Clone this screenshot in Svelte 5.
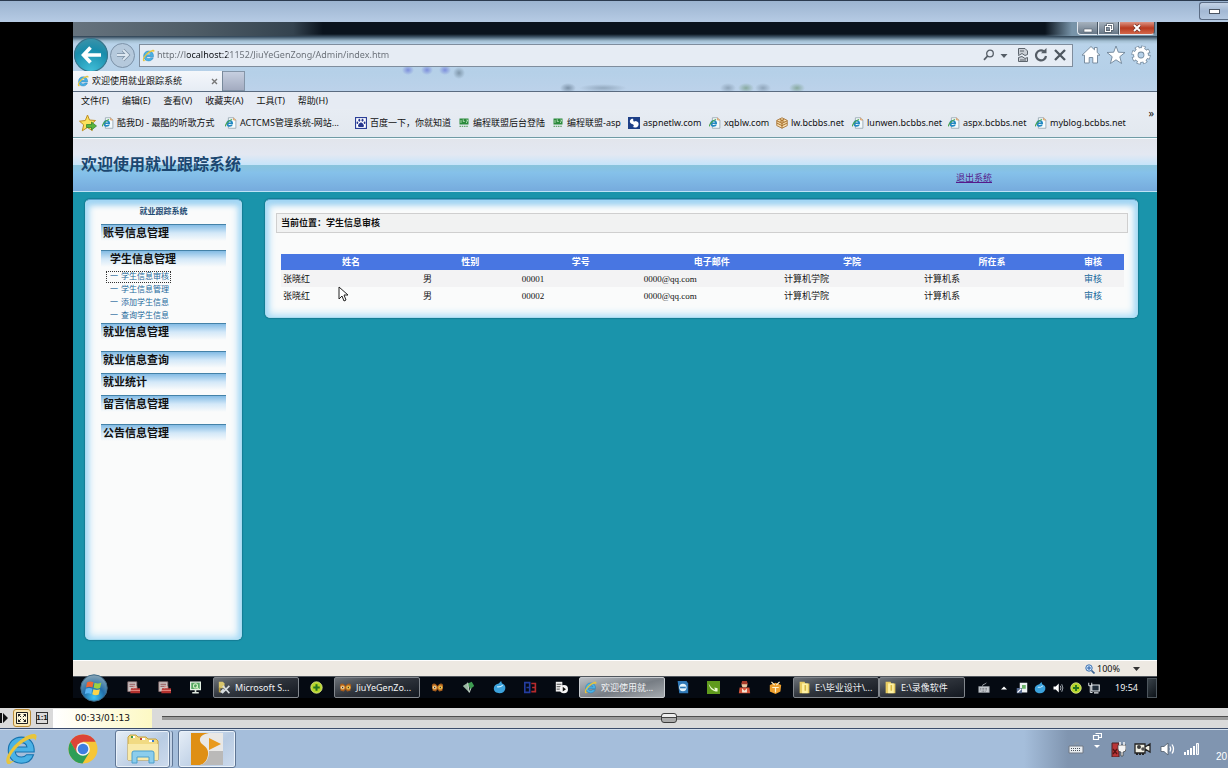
<script>
  const menus = ["文件(F)", "编辑(E)", "查看(V)", "收藏夹(A)", "工具(T)", "帮助(H)"]

  const favorites = [
    { icon: "page", label: "酷我DJ - 最酷的听歌方式" },
    { icon: "page", label: "ACTCMS管理系统-网站..." },
    { icon: "paw", label: "百度一下，你就知道" },
    { icon: "green", label: "编程联盟后台登陆" },
    { icon: "green", label: "编程联盟-asp" },
    { icon: "swirl", label: "aspnetlw.com" },
    { icon: "page", label: "xqblw.com" },
    { icon: "hex", label: "lw.bcbbs.net" },
    { icon: "page", label: "lunwen.bcbbs.net" },
    { icon: "page", label: "aspx.bcbbs.net" },
    { icon: "page", label: "myblog.bcbbs.net" }
  ]

  const groups = [
    { title: "账号信息管理" },
    {
      title: "学生信息管理",
      items: ["学生信息审核", "学生信息管理", "添加学生信息", "查询学生信息"]
    },
    { title: "就业信息管理" },
    { title: "就业信息查询" },
    { title: "就业统计" },
    { title: "留言信息管理" },
    { title: "公告信息管理" }
  ]

  const columns = ["姓名", "性别", "学号", "电子邮件", "学院", "所在系", "审核"]

  const students = [
    ["张晓红", "男", "00001", "0000@qq.com", "计算机学院", "计算机系"],
    ["张晓红", "男", "00002", "0000@qq.com", "计算机学院", "计算机系"]
  ]

  const tasks = [
    { icon: "toolbox" },
    { icon: "toolbox" },
    { icon: "monitor" },
    { icon: "tools", label: "Microsoft S..." },
    { icon: "plus" },
    { icon: "owl", label: "JiuYeGenZo..." },
    { icon: "owl" },
    { icon: "diamond" },
    { icon: "drop" },
    { icon: "books" },
    { icon: "docplay" },
    { icon: "ie", label: "欢迎使用就...", active: true },
    { icon: "bluepage" },
    { icon: "leaf" },
    { icon: "person" },
    { icon: "box" },
    { icon: "folder", label: "E:\\毕业设计\\...", joined: true },
    { icon: "folder", label: "E:\\录像软件", joined: true }
  ]

  const tray = ["keyboard", "up", "pages", "drop", "sound", "plus", "network"]

  let url = $state("http://localhost:21152/JiuYeGenZong/Admin/index.htm")
  let position = $state(47.5)
  let current = $state("学生信息审核")
</script>

{#snippet icon(name, size = 12)}
  <svg class="icon" width={size} height={size} viewBox="0 0 16 16" aria-hidden="true">
    {#if name === "ie"}
      <path d="M14.200 9.400H5.300c.2 1.500 1.300 2.400 2.900 2.400 1 0 1.900-.4 2.400-1.100h3.300c-.8 2.400-2.900 4-5.700 4-3.700 0-6.200-2.500-6.200-6.100C2 4.900 4.600 2.400 8.200 2.400c3.800 0 6.200 2.700 6 7zM10.800 7.100C10.600 5.700 9.600 5 8.100 5S5.700 5.800 5.300 7.100z" fill="#4ab2e6" stroke="#1672ad" stroke-width=".5" />
      <path d="M1.500 14.800C-.4 12.500 4 6 9 2.900c3.200-2 6-2.600 6.300-1.100.1.700-.2 1.500-.6 2.300.1-1.500-1.700-1.400-4.400 0C5.700 6.600 1.800 12 2.700 13.500c.4.600 1.400.3 2.500-.3-1.600 1.500-3 2.400-3.700 1.600z" fill="#e8c53c" />
    {:else if name === "page"}
      <path d="M4.500 1h7l3 3v11h-10z" fill="#f4fafc" stroke="#8b9da8" />
      <path d="M11.500 1v3h3" fill="#f6d9a0" stroke="#d08a5a" />
      <path d="M10.800 9.200H4.300c.1 1.100.8 1.600 1.900 1.600.7 0 1.300-.3 1.700-.8h2.600c-.7 2-2.200 3-4.200 3C3.600 13 1.800 11.300 1.800 8.500s1.800-4.600 4.500-4.600c2.900 0 4.600 2 4.500 5.300zM8 7.300c-.2-.9-.8-1.300-1.700-1.300s-1.500.4-1.800 1.300z" fill="#2389c2" />
      <path d="M.7 12.500C0 10 5 4 9.500 3.400" fill="none" stroke="#4aa54c" stroke-width="1.400" />
    {:else if name === "paw"}
      <path d="M0 0h16v16H0z" fill="#2b3f98" />
      <path d="M1.500 1.500h13v13h-13z" fill="#fff" />
      <ellipse cx="5.800" cy="4.300" rx="1.300" ry="1.900" fill="#26378f" />
      <ellipse cx="10" cy="4.300" rx="1.300" ry="1.900" fill="#26378f" />
      <ellipse cx="3.200" cy="7.600" rx="1.200" ry="1.600" fill="#26378f" />
      <ellipse cx="12.800" cy="7.600" rx="1.200" ry="1.600" fill="#26378f" />
      <path d="M8 7.200c1.800 0 4.400 3.200 3.900 5.200-.4 1.500-2.400.8-3.900.8s-3.500.7-3.900-.8C3.600 10.400 6.200 7.200 8 7.200z" fill="#26378f" />
    {:else if name === "green"}
      <path d="M2 2h12v8H2z" fill="#2b8a3c" />
      <path d="M4 4v4M7 3v3h2M11 4h2l-2 4" fill="none" stroke="#cfeccb" />
      <path d="M2 12.500h12" stroke="#69a56f" stroke-dasharray="2 1" stroke-width="1.500" />
    {:else if name === "swirl"}
      <path d="M0 0h16v16H0z" fill="#1d3f87" />
      <path d="M7 2.500C4 2 1.500 4.500 3 7.500c1 2 3.500 1 4.500 3 .7 1.500-.3 2.500-1.500 2.500 3 2 7 1 8-2.500.7-2.500-.5-4.500-3-5-1.200-.3-1.500.5-2.500.5S6.500 4.500 7 2.500z" fill="#fff" />
    {:else if name === "hex"}
      <path d="M8 1l7 3.500v7L8 15l-7-3.500v-7z" fill="#f5ddb0" stroke="#9b6322" />
      <path d="M1 5l7 3.500L15 5M1 8l7 3.500L15 8M8 5v10M5 3l6 3M11 3L5 6" fill="none" stroke="#a8702a" stroke-width="1.300" />
    {:else if name === "toolbox"}
      <path d="M1 1h11v12H1z" fill="#ccc6c6" stroke="#8b6e70" />
      <path d="M3 4h7M3 6.500h7" stroke="#8a3a3e" />
      <path d="M5 9h11v6H4z" fill="#b5322f" />
      <path d="M8 9V7h4v2M4 11.500h12" fill="none" stroke="#f0a79e" />
    {:else if name === "monitor"}
      <path d="M2 1.500h12v9H2z" fill="#54a561" stroke="#e4f1e4" stroke-width="1.500" />
      <path d="M4 14.500h8M8 11v3" stroke="#dfe8df" stroke-width="2" />
      <circle cx="8" cy="6" r="2.500" fill="none" stroke="#d5f3c6" stroke-width="1.300" />
      <path d="M9 7l3 3" stroke="#d5f3c6" stroke-width="1.500" />
    {:else if name === "tools"}
      <path d="M1 1h5l2 2v6H1z" fill="#d9c66c" />
      <path d="M3 14l4-4M6 6l8 9M14 6l-9 9" stroke="#d8dde0" stroke-width="2" />
      <path d="M2 8v6" stroke="#b79d42" stroke-width="2" />
    {:else if name === "plus"}
      <circle cx="8" cy="8" r="7" fill="#b6d52a" stroke="#e0ec92" />
      <path d="M8 4v8M4 8h8" stroke="#25731f" stroke-width="2.500" />
    {:else if name === "owl"}
      <path d="M1 5q3-4 7 1 4-5 7-1l-1 7-4 1-2-3-2 3-4-1z" fill="#a45c1d" />
      <circle cx="4.500" cy="8" r="2.600" fill="#f4dfb2" stroke="#d98625" />
      <circle cx="11.500" cy="8" r="2.600" fill="#f0d45e" stroke="#d98625" />
      <path d="M4.500 7v2M11.500 7v2" stroke="#472e1d" stroke-width="1.500" />
    {:else if name === "diamond"}
      <path d="M1 6l6-4 2 12z" fill="#9bb8a3" />
      <path d="M7 3l5-2 3 5-5 4z" fill="#3e9b51" />
      <path d="M7 2l2 12 2-5" fill="none" stroke="#e2eee4" />
    {:else if name === "drop"}
      <path d="M10 0l1 3c3 1 5 3 4 7-1 3-3 5-7 5S1 13 1 9c0-3 2-5 6-6z" fill="#3ca2dc" />
      <path d="M5 7q4 1 7-2" fill="none" stroke="#cceeff" stroke-width="1.300" />
    {:else if name === "books"}
      <path d="M1 2h6v12H1zM3 8h4" fill="none" stroke="#243d9f" stroke-width="2" />
      <path d="M9 3h5v10H9M10 8h4" fill="none" stroke="#b72a2d" stroke-width="2" />
    {:else if name === "docplay"}
      <path d="M1 1h8v12H1z" fill="#eee" />
      <path d="M2 4h6M2 7h5M2 10h4" stroke="#333" />
      <circle cx="11" cy="10" r="5" fill="#f5f5f5" />
      <path d="M9.500 7l4 3-4 3z" fill="#111" />
    {:else if name === "bluepage"}
      <path d="M2 0h11l2 3v12H4z" fill="#2f78b6" />
      <circle cx="8.500" cy="8" r="4.500" fill="#e3f4fb" />
      <path d="M5 8h7" fill="none" stroke="#2876b6" stroke-width="2" />
    {:else if name === "leaf"}
      <path d="M0 0h16v16H0z" fill="#5f9a1d" />
      <path d="M2 3c1 6 5 10 11 10V9L9 8l1 3C7 10 4 7 2 3z" fill="#ecfad2" />
    {:else if name === "person"}
      <circle cx="8" cy="4.500" r="3.500" fill="#e8c9a3" />
      <path d="M5 0h6l1 4H4z" fill="#a93c2c" />
      <path d="M2 8h12l1 7H1z" fill="#d5533a" />
      <path d="M5 9l3 3 3-3v5H5z" fill="#f3e7d6" />
    {:else if name === "box"}
      <path d="M1 5l7-3 7 3-1 8-6 3-7-3z" fill="#eea02e" />
      <path d="M3 1l4 4M13 1L9 5M4 8h8M8 8v6" stroke="#fff3cd" stroke-width="1.500" />
    {:else if name === "folder"}
      <path d="M2 1h6l1 2h5v12H2z" fill="#e8cc61" />
      <path d="M5 3h7v12H5z" fill="#fff2a4" />
      <path d="M8 5h2v7H8z" fill="#d7b843" />
    {:else if name === "keyboard"}
      <path d="M1 6h14v8H1z" fill="#c9cdd2" stroke="#858b92" />
      <path d="M3 8.500h10M3 10.500h10M5 12.500h6" stroke="#4b5056" stroke-dasharray="1 1" />
      <path d="M6 6q0-3 2-3t3-2" fill="none" stroke="#b8bcc1" />
    {:else if name === "up"}
      <path d="M4 10l4-4 4 4z" fill="#fff" />
    {:else if name === "pages"}
      <path d="M5 1h10v13H5z" fill="#eef2f4" />
      <path d="M8 4h5v5H8z" fill="#6ab369" />
      <path d="M1 8h7v7H1z" fill="#596c92" />
      <path d="M2 14l5-5" stroke="#fff" stroke-width="1.500" />
    {:else if name === "sound"}
      <path d="M2 6h3l4-4v12l-4-4H2z" fill="#fff" />
      <path d="M11 5q2 3 0 6M13 3q3 5 0 10" fill="none" stroke="#d8dfe5" />
    {:else if name === "network"}
      <path d="M5 4h10v8H5zM8 14.500h6" fill="#202d3a" stroke="#e4e8ec" stroke-width="1.500" />
      <path d="M1 1v4h4V1M3 5v9h3" fill="none" stroke="#e4e8ec" stroke-width="1.300" />
    {/if}
  </svg>
{/snippet}

<div class="desktop">
  <header class="player-top">
    <button class="player-min" aria-label="最小化"><i></i></button>
  </header>

  <main class="stage">
    <section class="browser">
      <div class="chrome">
        <div class="titlebar">
          <button class="win" aria-label="最小化">
            <svg width="10" height="10" viewBox="0 0 10 10"><path d="M1 6h8v3H1z" fill="#fff" stroke="#56606c" stroke-width=".6" /></svg>
          </button>
          <button class="win" aria-label="还原">
            <svg width="10" height="10" viewBox="0 0 10 10"><path d="M3.500 1.500h5v5h-2v2h-5v-5h2z" fill="none" stroke="#3f4854" stroke-width="2.200" /><path d="M3.500 3V1.500h5v5H7M1.500 3.500h5v5h-5z" fill="none" stroke="#fff" stroke-width="1.200" /></svg>
          </button>
          <button class="win close" aria-label="关闭">
            <svg width="10" height="10" viewBox="0 0 10 10"><path d="M2 2l6 6M8 2L2 8" stroke="#6e3027" stroke-width="3.200" /><path d="M2 2l6 6M8 2L2 8" stroke="#fff" stroke-width="2" /></svg>
          </button>
        </div>

        <div class="nav">
          <button class="back" aria-label="后退">
            <svg width="24" height="24" viewBox="0 0 24 24"><path d="M11.500 4.500L4.500 12l7 7.500M5 12h17" fill="none" stroke="#fff" stroke-width="3.600" /></svg>
          </button>
          <button class="forward" aria-label="前进">
            <svg width="16" height="16" viewBox="0 0 16 16"><path d="M8 3l5 5-5 5M2 8h11" fill="none" stroke="#7b8fa3" stroke-width="3.400" /><path d="M8 3l5 5-5 5M2 8h11" fill="none" stroke="#dce7f1" stroke-width="2" /></svg>
          </button>
          <div class="address">
            {@render icon("ie", 13)}
            <input aria-label="地址" bind:value={url} spellcheck="false" />
            <button aria-label="搜索">
              <svg width="12" height="12" viewBox="0 0 12 12"><circle cx="7" cy="4.500" r="3.300" fill="none" stroke="#555d66" stroke-width="1.300" /><path d="M4.600 7L1 10.800" stroke="#555d66" stroke-width="1.800" /></svg>
            </button>
            <button aria-label="下拉">
              <svg width="8" height="12" viewBox="0 0 8 12"><path d="M0.500 5h7L4 9z" fill="#555d66" /></svg>
            </button>
            <button class="compat" aria-label="兼容性视图">
              <svg width="12" height="14" viewBox="0 0 12 14"><path d="M1.500 6.500v-6H8l2.500 2.500v3.500l-2.500 1-3-2-3.500 2z" fill="#c9ced5" stroke="#5c646d" /><path d="M1.500 9.500v4h9v-4l-2.500 1-3-2z" fill="#c9ced5" stroke="#5c646d" /><path d="M3 3h4M3 12h6" stroke="#5c646d" /></svg>
            </button>
            <button aria-label="刷新">
              <svg width="14" height="14" viewBox="0 0 14 14"><path d="M12 8A5 5 0 1 1 9.800 3.200" fill="none" stroke="#555d66" stroke-width="2.200" /><path d="M7 5.300h5.500V0z" fill="#555d66" /></svg>
            </button>
            <button aria-label="停止">
              <svg width="14" height="14" viewBox="0 0 14 14"><path d="M2 2l10 10M12 2L2 12" stroke="#4e565f" stroke-width="2.300" /></svg>
            </button>
          </div>
          <div class="nav-tools">
            <button aria-label="主页">
              <svg width="20" height="20" viewBox="0 0 20 20"><path d="M10 1.500l3.500 3.300V2.500h2.700v5L19 10.200h-2.500V18h-4.700v-5.500H8.200V18H3.500v-7.800H1z" fill="#fff" stroke="#6f8599" stroke-width=".9" /></svg>
            </button>
            <button aria-label="收藏夹">
              <svg width="20" height="20" viewBox="0 0 20 20"><path d="M10 1l2.300 6.200 6.700.3-5.200 4.200 1.800 6.800L10 14.800l-5.600 3.700 1.800-6.800L1 7.500l6.700-.3z" fill="#fff" stroke="#6f8599" stroke-width=".9" /></svg>
            </button>
            <button aria-label="工具">
              <svg width="20" height="20" viewBox="0 0 20 20">
                <circle cx="10" cy="10" r="7.700" fill="none" stroke="#6f8599" stroke-width="3.800" stroke-dasharray="4 2.047" />
                <circle cx="10" cy="10" r="5.200" fill="none" stroke="#6f8599" stroke-width="5.200" />
                <circle cx="10" cy="10" r="7.300" fill="none" stroke="#fff" stroke-width="3.200" stroke-dasharray="2.600 3.133" stroke-dashoffset="-.6" />
                <circle cx="10" cy="10" r="5.200" fill="none" stroke="#fff" stroke-width="3.600" />
              </svg>
            </button>
          </div>
        </div>

        <div class="tabs">
          <button class="tab">
            {@render icon("ie")}
            <span>欢迎使用就业跟踪系统</span>
            <svg width="7" height="7" viewBox="0 0 7 7"><path d="M1 1l5 5M6 1L1 6" stroke="#777" stroke-width="1.400" /></svg>
          </button>
          <button class="new-tab" aria-label="新建选项卡"></button>
        </div>
      </div>

      <nav class="menubar">
        {#each menus as menu}
          <button>{menu}</button>
        {/each}
      </nav>

      <nav class="favorites">
        <button class="add" aria-label="添加到收藏夹栏">
          <svg width="18" height="18" viewBox="0 0 18 18"><path d="M8.500 1l2 5 6 .5-4.500 4 1.300 6-5-3-5 3.300 1.400-6L.5 7.200l5.800-.7z" fill="#fbe25c" stroke="#c08e24" /><path d="M7.500 10.500h5V8l5 4-5 4v-2.500h-5z" fill="#57b53d" stroke="#2d7d2a" stroke-width=".7" /></svg>
        </button>
        {#each favorites as favorite}
          <a href="#favorite">{@render icon(favorite.icon)}{favorite.label}</a>
        {/each}
        <button class="more" aria-label="更多">»</button>
      </nav>

      <div class="page">
        <header class="banner">
          <h1>欢迎使用就业跟踪系统</h1>
          <a href="#logout">退出系统</a>
        </header>

        <div class="body">
          <aside class="panel sidebar">
            <h2>就业跟踪系统</h2>
            <div class="groups">
              {#each groups as group}
                <section class="group" class:open={group.items}>
                  <h3>{group.title}</h3>
                  {#if group.items}
                    <ul>
                      {#each group.items as item}
                        <li><a href="#item" class:current={current === item} onclick={() => current = item}><span>一</span>{item}</a></li>
                      {/each}
                    </ul>
                  {/if}
                </section>
              {/each}
            </div>
          </aside>

          <section class="panel content">
            <h2>当前位置：学生信息审核</h2>
            <table>
              <thead>
                <tr>
                  {#each columns as column}
                    <th>{column}</th>
                  {/each}
                </tr>
              </thead>
              <tbody>
                {#each students as student}
                  <tr>
                    {#each student as value}
                      <td>{value}</td>
                    {/each}
                    <td><a href="#audit">审核</a></td>
                  </tr>
                {/each}
              </tbody>
            </table>
            <svg class="cursor" width="11" height="17" viewBox="0 0 11 17" aria-hidden="true"><path d="M1 1v12l3-3 2 5 2-1-2-5h4z" fill="#fff" stroke="#222" /></svg>
          </section>
        </div>
      </div>

      <footer class="status">
        <svg width="10" height="10" viewBox="0 0 10 10" aria-hidden="true"><circle cx="4" cy="4" r="3.200" fill="#d5ebff" stroke="#3a6fae" /><path d="M4 2v4M2 4h4" stroke="#2b5fa5" /><path d="M6.500 6.500L9.500 9.500" stroke="#3c6494" stroke-width="1.700" /></svg>
        <button>100%</button>
        <svg width="7" height="4" viewBox="0 0 7 4" aria-hidden="true"><path d="M0 0h7L3.500 4z" fill="#333" /></svg>
      </footer>

      <footer class="taskbar">
        <button class="orb" aria-label="开始">
          <svg width="28" height="28" viewBox="0 0 28 28">
            <defs>
              <radialGradient id="orb" cx=".5" cy=".85" r=".8">
                <stop offset="0" stop-color="#3cc5f5" />
                <stop offset=".5" stop-color="#226ea9" />
                <stop offset="1" stop-color="#7fa0b4" />
              </radialGradient>
            </defs>
            <circle cx="14" cy="14" r="13.200" fill="url(#orb)" stroke="#406c88" />
            <path d="M7 8.500q3-2 6.500-.3l-1 5.300q-3-1.700-6.500 0z" fill="#ee6634" />
            <path d="M14.600 8.700q3.500 1.500 6.800-.2l-1.300 5.400q-3 1.500-6.500-.1z" fill="#9fd13f" />
            <path d="M5.800 14.800q3.300-1.800 6.500 0l-1 5.200q-3.300-1.600-6.500.1z" fill="#59b4f2" />
            <path d="M13.400 15.200q3.300 1.600 6.500.1l-1.200 5.200q-3 1.600-6.400-.2z" fill="#fbd54a" />
          </svg>
        </button>
        {#each tasks as task}
          {#if task.label}
            <button class="task" class:active={task.active} class:joined={task.joined}>
              {@render icon(task.icon, 13)}<span>{task.label}</span>
            </button>
          {:else}
            <button class="slot" aria-label={task.icon}>{@render icon(task.icon, 13)}</button>
          {/if}
        {/each}
        <div class="tray">
          {#each tray as item}
            <button aria-label={item}>{@render icon(item)}</button>
          {/each}
          <time>19:54</time>
          <button class="peek" aria-label="显示桌面"></button>
        </div>
      </footer>
    </section>
  </main>

  <section class="player">
    <button class="play" aria-label="播放">
      <svg width="8" height="12" viewBox="0 0 8 12"><path d="M0 1h2v10H0zM3 1l5 5-5 5z" fill="#111" /></svg>
    </button>
    <button class="fit" aria-label="适合窗口">
      <svg width="12" height="12" viewBox="0 0 12 12"><path d="M.5.5h11v11H.5z" fill="#fff9dc" stroke="#222" /><path d="M2 2h3L2 5zM10 2v3L7 2zM2 10V7l3 3zM10 10H7l3-3z" fill="#222" /><path d="M3 3l6 6M9 3L3 9" stroke="#222" stroke-dasharray="3 2.485" /></svg>
    </button>
    <button class="actual">1:1</button>
    <output>00:33/01:13</output>
    <input type="range" min="0" max="100" step="any" bind:value={position} aria-label="播放进度" />
  </section>

  <footer class="host-bar">
    <button class="launch" aria-label="Internet Explorer">{@render icon("ie", 34)}</button>
    <button class="launch" aria-label="Chrome">
      <svg width="30" height="30" viewBox="0 0 30 30">
        <circle cx="15" cy="15" r="14.500" fill="#f6c637" />
        <path d="M2.400 7.800A14.500 14.500 0 0 1 27.600 7.800H15L8.700 18.700z" fill="#dc4437" />
        <path d="M2.400 7.800L8.800 18.600 21.300 18.600 14.500 29.500A14.500 14.500 0 0 1 2.400 7.800z" fill="#2e9e57" />
        <circle cx="15" cy="15" r="6.800" fill="#f7f7f3" />
        <circle cx="15" cy="15" r="5.300" fill="#3f7ee0" />
      </svg>
    </button>
    <button class="running stacked" aria-label="资源管理器">
      <svg width="34" height="30" viewBox="0 0 34 30">
        <path d="M2 3l2-2h6l2 2h8l2 2h8l2 2v19H2z" fill="#f1da83" stroke="#c7a13e" />
        <path d="M5 2h4v2H5zM14 4h5v2h-5zM23 6h5v2h-5z" fill="#fff" />
        <path d="M5 2h2v2H5z" fill="#3f9b4b" /><path d="M14 4h2v2h-2z" fill="#c44436" /><path d="M26 6h2v2h-2z" fill="#3d7ec9" />
        <path d="M2 10h30v16H2z" fill="#f9eaa9" />
        <path d="M6 29V19q0-2 2-2h18q2 0 2 2v10h-5v-6H11v6z" fill="#8bcdec" stroke="#4a9fcd" />
      </svg>
    </button>
    <button class="running" aria-label="播放器">
      <svg width="32" height="32" viewBox="0 0 32 32">
        <path d="M0 0h32v32H0z" fill="#e9e8e6" />
        <path d="M0 0h18C10 1 7 6 10 10c3 3 8 5 7 12-1 6-4 9-8 10H0z" fill="#df8f14" />
        <path d="M18 18h14v14H9c7-2 9-7 9-14z" fill="#bab9b8" />
        <path d="M18 5l12 6-12 6z" fill="#e99a1d" />
      </svg>
    </button>
    <div class="host-tray">
      <button aria-label="键盘">
        <svg width="16" height="16" viewBox="0 0 16 16"><path d="M1 5h14v7H1z" fill="#e9edf1" stroke="#707984" /><path d="M3 7.500h10M3 9.500h10" stroke="#4c535b" stroke-dasharray="1 1" /><path d="M7 4V2h4" fill="none" stroke="#8f98a3" /></svg>
      </button>
      <button class="restore" aria-label="还原">
        <svg width="10" height="18" viewBox="0 0 10 18"><path d="M3.500 1.500h6v4h-3M1.500 3.500h5v4h-5z" fill="none" stroke="#fff" stroke-width="1.200" /><path d="M2 13h6l-3 3z" fill="#fff" /></svg>
      </button>
      <button aria-label="电源">
        <svg width="16" height="16" viewBox="0 0 16 16"><path d="M2 2h7v14H2z" fill="#b93537" stroke="#4d2225" /><path d="M8 4h8v4q0 3-3 3v4h-2v-4q-3 0-3-3z" fill="#f5f5f5" stroke="#333" stroke-width=".7" /><path d="M10 1v3M14 1v3" stroke="#f5f5f5" stroke-width="1.500" /><path d="M3 8l4 5M7 8l-4 5" stroke="#571414" stroke-width="1.300" /></svg>
      </button>
      <button aria-label="摄像">
        <svg width="18" height="14" viewBox="0 0 18 14"><path d="M1 2h10v9H1zM11 5l5-3v8l-5-3z" fill="#f0efe3" stroke="#222" stroke-width="1.300" /><circle cx="5" cy="5" r="2" fill="#3e3e3e" /><circle cx="9" cy="7" r="1.800" fill="#545454" /><path d="M2 12h8" stroke="#222" stroke-width="2" stroke-dasharray="2 1" /></svg>
      </button>
      <button aria-label="音量">
        <svg width="16" height="16" viewBox="0 0 16 16"><path d="M1 5.500h3L8 2v12l-4-3.500H1z" fill="#fff" stroke="#4e5a68" stroke-width=".8" /><path d="M10 5.500q1.500 2.500 0 5M12 3.500q3 4.500 0 9" fill="none" stroke="#fff" stroke-width="1.300" /></svg>
      </button>
      <button aria-label="网络">
        <svg width="16" height="16" viewBox="0 0 16 16"><path d="M0 11h2v3H0zM3 9h2v5H3zM6 7h2v7H6zM9 5h2v9H9z" fill="#fff" /><path d="M12.500 2.500h2v11h-2z" fill="#b5c2d2" stroke="#fff" /></svg>
      </button>
      <span class="year">20</span>
    </div>
  </footer>
</div>

<style>
  :global(body) {
    margin: 0;
    background: #000;
  }

  .desktop {
    display: flex;
    flex-direction: column;
    min-height: 100vh;
    background: #000;
    color: #111;
    font: 9px/12px "Noto Sans", "Noto Sans CJK SC", sans-serif;
  }

  button {
    display: flex;
    align-items: center;
    justify-content: center;
    padding: 0;
    border: 0;
    background: none;
    color: inherit;
    font: inherit;
    white-space: nowrap;
  }

  svg {
    display: block;
    flex: none;
  }

  h1, h2, h3, ul {
    margin: 0;
    padding: 0;
  }

  .player-top {
    display: flex;
    justify-content: flex-end;
    box-sizing: border-box;
    height: 22px;
    border-top: 1px solid #2b3a4e;
    background: linear-gradient(#9cb4d0, #b6cbe4);
  }

  .player-min {
    width: 29px;
    height: 18px;
    margin-top: 1px;
    border: 1px solid #5b6c84;
    border-right: 0;
    border-radius: 3px 0 0 3px;
    background: linear-gradient(#c4d3e6, #a3b8d3 50%, #b3c7df);
  }

  .player-min i {
    width: 9px;
    height: 3px;
    border: 1px solid #4b5563;
    background: #fff;
  }

  .stage {
    display: flex;
    flex: 1;
    padding: 0 71px 10px 73px;
  }

  .browser {
    display: flex;
    flex: 1;
    flex-direction: column;
    min-width: 0;
    background: #e6ebf3;
  }

  /* glass frame, with the window behind it showing through */
  .chrome {
    border-bottom: 1px solid #5a6b80;
    background:
      radial-gradient(6px 5px at 335px 48px, #7d8fdc, transparent) no-repeat,
      radial-gradient(6px 5px at 354px 48px, #7d8fdc, transparent) no-repeat,
      radial-gradient(6px 5px at 372px 48px, #7d8fdc, transparent) no-repeat,
      radial-gradient(6px 6px at 386px 51px, #7f97ab, transparent) no-repeat,
      radial-gradient(8px 5px at 495px 66px, #7c92a8, transparent) no-repeat,
      radial-gradient(24px 4px at 530px 66px, #93a9bf, transparent) no-repeat,
      radial-gradient(8px 5px at 655px 66px, #8fa5ba, transparent) no-repeat,
      radial-gradient(8px 5px at 673px 66px, #88aa9f, transparent) no-repeat,
      radial-gradient(8px 5px at 690px 66px, #8fa5ba, transparent) no-repeat,
      radial-gradient(8px 5px at 724px 66px, #88aa9f, transparent) no-repeat,
      linear-gradient(90deg, #66737e 0, #4f5d67 120px, #34434f 220px, transparent 250px) top / 100% 14px no-repeat,
      linear-gradient(90deg, transparent calc(100% - 112px), #7894a9 calc(100% - 85px)) top / 100% 14px no-repeat,
      linear-gradient(#0a131d 0, #0a131d 12px, #40576a 15px, #a3bfd2 19px, #b9d3ea 22px, #b5d0e8 50px, #bcd2ea);
  }

  .titlebar {
    display: flex;
    justify-content: flex-end;
    height: 17px;
    padding-right: 2px;
  }

  .win {
    box-sizing: border-box;
    width: 21px;
    height: 13px;
    border: 1px solid #e2e8ef;
    border-top: 0;
    border-right: 1px solid #465462;
    background: linear-gradient(#a6b2be, #677787);
  }

  .win:first-child {
    border-radius: 0 0 0 4px;
  }

  .win.close {
    width: 36px;
    border-radius: 0 0 4px 0;
    background: linear-gradient(#dd9585, #b83a20 50%, #d2674a);
  }

  .nav {
    display: flex;
    align-items: center;
    height: 32px;
  }

  .back {
    width: 34px;
    height: 34px;
    margin: -1px 2px -1px 1px;
    border-radius: 50%;
    background: radial-gradient(circle at 50% 100%, #43c0da, #188cab 60%, #4b95a8);
    box-shadow: inset 0 0 0 1px #3c7288;
  }

  .forward {
    box-sizing: border-box;
    width: 25px;
    height: 25px;
    border: 1px solid #7c92a8;
    border-radius: 50%;
    background: #b5c9dc;
  }

  .address {
    display: flex;
    flex: 1;
    align-items: center;
    gap: 5px;
    box-sizing: border-box;
    height: 23px;
    margin-left: 4px;
    padding: 0 5px 0 2px;
    border: 1px solid #7f8d9d;
    background: #e6ecf4;
  }

  .address input {
    flex: 1;
    min-width: 0;
    margin-left: -3px;
    padding: 0;
    border: 0;
    outline: 0;
    /* the host name stands out from the rest of the address */
    background: linear-gradient(90deg, #666c74 30px, #0c0f14 30px, #0c0f14 70px, #666c74 70px);
    background-clip: text;
    -webkit-text-fill-color: transparent;
    font: 9px/14px "Noto Sans", sans-serif;
  }

  .address .compat {
    margin-left: 4px;
  }

  .nav-tools {
    display: flex;
    gap: 5px;
    margin: 0 6px 0 8px;
  }

  .tabs {
    display: flex;
    height: 20px;
  }

  .tab {
    justify-content: flex-start;
    gap: 3px;
    width: 150px;
    padding: 0 4px;
    border-right: 1px solid #78899b;
    background: linear-gradient(#f4f7fb, #e6ecf4);
  }

  .tab span {
    flex: 1;
    text-align: left;
  }

  .new-tab {
    width: 22px;
    border: 1px solid #8495a8;
    border-left: 0;
    background: linear-gradient(#c6cfe0, #a3abc0);
  }

  .menubar {
    display: flex;
    gap: 13px;
    height: 17px;
    padding-left: 8px;
  }

  .favorites {
    display: grid;
    grid-template-columns: 29px 123px 130px 103px 94px 76px 81px 67px 76px 96px 87px 1fr auto;
    align-items: center;
    height: 28px;
    border-bottom: 1px solid #6f9ba5;
    background: linear-gradient(#e7ecf3, #e2e8ef);
  }

  .favorites a {
    display: flex;
    align-items: center;
    gap: 3px;
    color: inherit;
    text-decoration: none;
    white-space: nowrap;
  }

  .favorites .more {
    align-self: start;
    padding-right: 3px;
    font-size: 11px;
    line-height: 8px;
  }

  .page {
    display: flex;
    flex: 1;
    flex-direction: column;
    background: #1a94ab;
  }

  .banner {
    display: flex;
    align-items: center;
    justify-content: space-between;
    box-sizing: border-box;
    height: 54px;
    padding: 0 165px 0 8px;
    border-top: 1px solid #f4fbff;
    border-bottom: 1px solid #bfe3f5;
    background: linear-gradient(#e2e5ec, #e3e8f2 30%, #c6e4fa 50%, #8ac4dc 50%, #85c1ea 65%, #76abdd);
  }

  .banner h1 {
    padding-bottom: 4px;
    color: #1b4770;
    font: bold 16px/20px "Noto Sans CJK SC", sans-serif;
  }

  .banner a {
    align-self: flex-end;
    padding-bottom: 7px;
    color: #551a8b;
    font-family: "Noto Sans CJK SC", sans-serif;
  }

  .body {
    display: flex;
    flex: 1;
    align-items: flex-start;
    gap: 23px;
    padding: 7px 19px 20px 12px;
    font-family: "Liberation Serif", "Noto Sans CJK SC", sans-serif;
  }

  .panel {
    box-sizing: border-box;
    border: 1px solid #a9dbf0;
    border-top-color: #5ba3cb;
    border-radius: 5px;
    background: #fafbfb;
    box-shadow: 0 0 1px 1px #147c94, inset 0 0 8px 2px #a6dcf8, inset 0 4px 6px #8fc4ea;
  }

  .sidebar {
    align-self: stretch;
    width: 157px;
    padding: 5px 15px;
  }

  .sidebar h2 {
    color: #1e4c74;
    font-size: 8px;
    line-height: 13px;
    text-align: center;
  }

  .groups {
    display: grid;
    grid-template-rows: 26px 73px 28px 22px 22px 29px auto;
    margin-top: 6px;
  }

  .group {
    border-top: 1px solid #4482a8;
    background: linear-gradient(#83bbe4, #d3e8f8 8px, #fafbfb 16px);
  }

  h3 {
    padding-left: 2px;
    font-size: 11px;
    line-height: 16px;
  }

  .open h3 {
    padding-left: 9px;
  }

  .group ul {
    padding: 4px 0 0 6px;
    list-style: none;
  }

  .group li {
    height: 13px;
    font-size: 8px;
    line-height: 12px;
  }

  .group a {
    display: inline-block;
    padding: 0 1px;
    color: #25699b;
    line-height: 10px;
    text-decoration: none;
  }

  .group a span {
    margin: 0 3px 0 2px;
  }

  .group a.current {
    outline: 1px dotted #333;
  }

  .content {
    position: relative;
    flex: 1;
    min-width: 0;
    padding: 13px 9px 13px 10px;
  }

  .content h2 {
    padding-left: 4px;
    border: 1px solid #cfcfcf;
    background: #f1f2f2;
    font-size: 9px;
    line-height: 18px;
  }

  table {
    width: calc(100% - 9px);
    margin: 21px 0 0 5px;
    border-collapse: collapse;
    table-layout: fixed;
  }

  th, td {
    height: 17px;
    padding: 0 2px;
    font-size: 9px;
    line-height: 12px;
    text-align: left;
  }

  th {
    width: 16.7%;
    height: 16px;
    background: #4876e2;
    color: #fff;
    text-align: center;
  }

  th:nth-child(2) {
    width: 11.6%;
  }

  th:nth-child(3) {
    width: 14.5%;
  }

  th:last-child {
    width: 7.1%;
  }

  td:last-child {
    text-align: center;
  }

  td a {
    color: #18699c;
    text-decoration: none;
  }

  tbody tr:nth-child(odd) {
    background: #f3f3f4;
  }

  .cursor {
    position: absolute;
    top: 86px;
    left: 72px;
  }

  .status {
    display: flex;
    align-items: center;
    justify-content: flex-end;
    gap: 2px;
    box-sizing: border-box;
    height: 16px;
    padding: 1px 17px 0 0;
    border-top: 1px solid #fff;
    background: #ede9e2;
  }

  .status button {
    margin-right: 11px;
  }

  .taskbar {
    display: flex;
    align-items: center;
    height: 22px;
    border-top: 1px solid #50565c;
    background: #050a12;
    color: #f2f4f6;
    box-sizing: border-box;
  }

  .orb {
    width: 41px;
    height: 28px;
    margin: -3px 4px -3px 0;
    z-index: 1;
  }

  .slot {
    flex: 0 1 31px;
    min-width: 0;
    height: 20px;
  }

  .task {
    flex: 0 1 86px;
    justify-content: flex-start;
    gap: 4px;
    box-sizing: border-box;
    min-width: 0;
    height: 21px;
    margin: 0 2px;
    padding: 0 4px;
    border: 1px solid #82878d;
    border-radius: 2px;
    background: linear-gradient(165deg, #6c7278, #30353d 45%, #131820);
  }

  .task.active {
    border-color: #c8ccd0;
    background: linear-gradient(165deg, #b8bdc2, #777d84 55%, #a4a9ae);
  }

  .task.joined + .joined {
    margin-left: -2px;
  }

  .tray {
    display: flex;
    align-items: center;
    margin-left: auto;
    height: 100%;
  }

  .tray button {
    width: 18px;
  }

  .tray button:first-child {
    margin-right: 2px;
  }

  .tray time {
    margin: 0 9px 0 12px;
  }

  .tray .peek {
    box-sizing: border-box;
    width: 10px;
    height: 20px;
    border: 1px solid #4d565d;
    background: linear-gradient(135deg, #394249, #0d1319);
  }

  .player {
    display: flex;
    align-items: center;
    height: 20px;
    background: #dadada;
  }

  .play {
    width: 8px;
    margin-right: 5px;
  }

  .fit {
    box-sizing: border-box;
    width: 18px;
    height: 18px;
    border: 1px solid #b98b36;
    border-radius: 3px;
    background: #fbe9b4;
  }

  .actual {
    box-sizing: border-box;
    width: 12px;
    height: 12px;
    margin: 0 5px;
    border: 1px solid #333;
    font: bold 8px/10px "Liberation Sans", sans-serif;
  }

  .player output {
    width: 99px;
    background: linear-gradient(90deg, #fff, #fdf9c4);
    font: 9px/19px "DejaVu Sans", sans-serif;
    text-align: center;
  }

  .player input {
    flex: 1;
    min-width: 0;
    height: 18px;
    margin: 0 0 0 10px;
    appearance: none;
    background: linear-gradient(#4e4e4e, #4e4e4e 1px, #9b9b9b 1px) center / 100% 4px no-repeat;
  }

  .player input::-webkit-slider-thumb {
    appearance: none;
    box-sizing: border-box;
    width: 16px;
    height: 10px;
    border: 1px solid #3c3c3c;
    border-radius: 3px;
    background: linear-gradient(#eee 40%, #444 40%, #444 55%, #aaa 55%);
  }

  .host-bar {
    display: flex;
    align-items: center;
    box-sizing: border-box;
    height: 40px;
    border-top: 1px solid #3b4c6a;
    background: linear-gradient(90deg, transparent calc(100% - 204px), #8095b0 calc(100% - 160px)), #a5bedb;
    box-shadow: inset 0 1px #d5e1ef;
  }

  .launch {
    width: 42px;
    margin-right: 20px;
  }

  .launch + .launch {
    margin-right: 11px;
  }

  .running {
    box-sizing: border-box;
    width: 58px;
    height: 38px;
    border: 1px solid #5f7695;
    border-radius: 3px;
    background: linear-gradient(135deg, #e6eef7, #b9cce3 60%, #cddbed);
    box-shadow: inset 0 0 0 1px #eaf2fa;
  }

  .running.stacked {
    width: 55px;
    margin-right: 8px;
    box-shadow: inset 0 0 0 1px #eaf2fa, 3px 0 0 -1px #c3d3e7, 4px 0 0 -1px #5f7695;
  }

  .host-tray {
    display: flex;
    align-items: center;
    gap: 8px;
    margin-left: auto;
    color: #fff;
  }

  .restore {
    align-self: flex-start;
  }

  .year {
    width: 12px;
    margin: 17px 0 0 8px;
    font: 10px/16px "Liberation Sans", sans-serif;
  }
</style>
